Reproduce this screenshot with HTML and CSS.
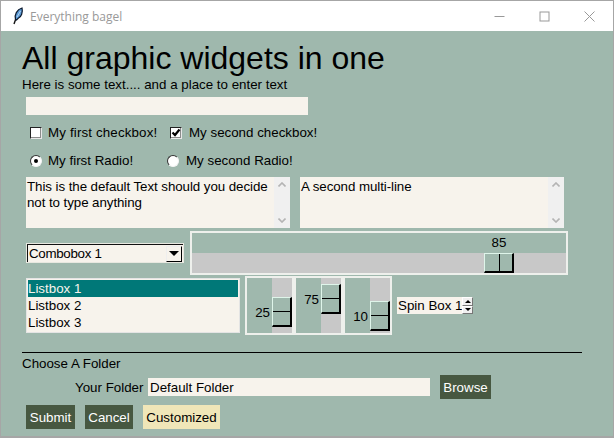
FILE: index.html
```html
<!DOCTYPE html>
<html lang="en">
<head>
    <meta charset="UTF-8">
    <title>Everything bagel</title>
    <link rel="stylesheet" href="styles.css">
</head>
<body>
    <div class="window">
        <div class="titlebar">
            <svg class="feather" width="12" height="18" viewBox="0 0 12 18">
                <path d="M2 17 L4.5 10" fill="none" stroke="#111" stroke-width="1.4"/>
                <path d="M3.5 12.5 C2 8 5 2.5 10 1 C11 5 9.5 10 6 11.5 L4.5 13 Z" fill="#5a9ad6" stroke="#0d1a2e" stroke-width="1.2"/>
                <path d="M5 10 L8.5 4" fill="none" stroke="#cfe3f7" stroke-width="0.8"/>
            </svg>
            <span class="title-text">Everything bagel</span>
            <div class="win-controls">
                <svg width="11" height="11" viewBox="0 0 11 11"><path d="M0.5 5.5 H10.5" stroke="#999" fill="none"/></svg>
                <svg width="11" height="11" viewBox="0 0 11 11"><rect x="1" y="1" width="9" height="9" stroke="#999" fill="none"/></svg>
                <svg width="11" height="11" viewBox="0 0 11 11"><path d="M0.5 0.5 L10.5 10.5 M10.5 0.5 L0.5 10.5" stroke="#999" fill="none"/></svg>
            </div>
        </div>

        <div class="content">
            <h1>All graphic widgets in one</h1>
            <div class="intro">Here is some text.... and a place to enter text</div>
            <input class="field field-main" type="text">

            <div class="check-row">
                <label class="opt opt-check1"><span class="box"></span>My first checkbox!</label>
                <label class="opt"><span class="box checked"><svg width="10" height="10" viewBox="0 0 10 10"><path d="M1.5 4.5 L4 7 L8.5 1.5" fill="none" stroke="#000" stroke-width="2.2"/></svg></span>My second checkbox!</label>
            </div>
            <div class="radio-row">
                <label class="opt opt-radio1"><span class="radio on"></span>My first Radio!</label>
                <label class="opt"><span class="radio"></span>My second Radio!</label>
            </div>

            <div class="text-row">
                <div class="multi">
                    <div class="multi-text">This is the default Text should you decide not to type anything</div>
                    <div class="scrollbar">
                        <svg width="8" height="5" viewBox="0 0 8 5"><path d="M0.5 4.5 L4 1 L7.5 4.5" fill="none" stroke="#b4b4b4" stroke-width="1.6"/></svg>
                        <svg width="8" height="5" viewBox="0 0 8 5"><path d="M0.5 0.5 L4 4 L7.5 0.5" fill="none" stroke="#b4b4b4" stroke-width="1.6"/></svg>
                    </div>
                </div>
                <div class="multi">
                    <div class="multi-text">A second multi-line</div>
                    <div class="scrollbar">
                        <svg width="8" height="5" viewBox="0 0 8 5"><path d="M0.5 4.5 L4 1 L7.5 4.5" fill="none" stroke="#b4b4b4" stroke-width="1.6"/></svg>
                        <svg width="8" height="5" viewBox="0 0 8 5"><path d="M0.5 0.5 L4 4 L7.5 0.5" fill="none" stroke="#b4b4b4" stroke-width="1.6"/></svg>
                    </div>
                </div>
            </div>

            <div class="combo-row">
                <div class="combo">
                    <div class="combo-text">Combobox 1</div>
                    <div class="combo-btn"><span class="arrow-down"></span></div>
                </div>
                <div class="hslider">
                    <div class="hslider-value" style="margin-left: 292px">85</div>
                    <div class="hslider-trough">
                        <div class="thumb-h" style="margin-left: 292px"></div>
                    </div>
                </div>
            </div>

            <div class="list-row">
                <div class="listbox">
                    <div class="list-item selected">Listbox 1</div>
                    <div class="list-item">Listbox 2</div>
                    <div class="list-item">Listbox 3</div>
                </div>
                <div class="vsliders">
                    <div class="vslider">
                        <div class="vslider-value" style="margin-top: 27px">25</div>
                        <div class="vslider-trough"><div class="thumb-v" style="margin-top: 19px"></div></div>
                    </div>
                    <div class="vslider">
                        <div class="vslider-value" style="margin-top: 14px">75</div>
                        <div class="vslider-trough"><div class="thumb-v" style="margin-top: 6px"></div></div>
                    </div>
                    <div class="vslider">
                        <div class="vslider-value" style="margin-top: 31px">10</div>
                        <div class="vslider-trough"><div class="thumb-v" style="margin-top: 23px"></div></div>
                    </div>
                </div>
                <div class="spin">
                    <div class="spin-text">Spin Box 1</div>
                    <div class="spin-btns">
                        <div class="spin-btn"><span class="arrow-up"></span></div>
                        <div class="spin-btn"><span class="arrow-down small"></span></div>
                    </div>
                </div>
            </div>

            <div class="divider"></div>
            <div class="folder-title">Choose A Folder</div>
            <div class="folder-row">
                <span class="folder-label">Your Folder</span>
                <input class="field field-folder" type="text" value="Default Folder">
                <button class="btn btn-browse">Browse</button>
            </div>
            <div class="button-row">
                <button class="btn btn-submit">Submit</button>
                <button class="btn btn-cancel">Cancel</button>
                <button class="btn btn-custom">Customized</button>
            </div>
        </div>
    </div>
</body>
</html>
```

FILE: styles.css
```css
* {
    box-sizing: border-box;
}
body {
    margin: 0;
    font-family: "Liberation Sans", Arial, sans-serif;
    font-size: 13.33px;
    color: #000;
}
.window {
    width: 614px;
    height: 438px;
    border: 1px solid #a6a6a6;
    border-bottom-width: 2px;
    background-color: #9FB8AD;
    overflow: hidden;
}
.titlebar {
    height: 30px;
    background-color: #fff;
    display: flex;
    align-items: center;
    padding-left: 11px;
}
.title-text {
    font-family: "Open Sans", sans-serif;
    font-size: 12px;
    color: #999;
    margin-left: 6px;
}
.win-controls {
    margin-left: auto;
    display: flex;
    gap: 34px;
    padding-right: 18px;
}
.content {
    padding: 0 0 0 21px;
}
h1 {
    margin: 9px 0 0;
    font-size: 32px;
    font-weight: normal;
    line-height: 37px;
}
.intro {
    line-height: 16px;
    height: 16px;
}
.field {
    display: block;
    height: 18px;
    border: none;
    background-color: #F7F3EC;
    font-family: inherit;
    font-size: 13.33px;
    padding: 0 2px;
    margin: 0;
    outline: none;
    color: #000;
}
.field-main {
    width: 282px;
    margin: 4px 0 0 4px;
}
.opt {
    display: flex;
    align-items: center;
    line-height: 16px;
}
.check-row {
    display: flex;
    margin: 10px 0 0 8px;
    height: 16px;
}
.opt-check1 {
    width: 140px;
    letter-spacing: 0.15px;
}
.radio-row {
    display: flex;
    margin: 12px 0 0 8px;
    height: 16px;
}
.opt-radio1 {
    width: 137px;
}
.box {
    width: 12px;
    height: 12px;
    border: 1px solid #222;
    border-right-color: #e8e8e8;
    border-bottom-color: #e8e8e8;
    box-shadow: inset -1px -1px 0 #8c8c8c;
    background-color: #fff;
    margin-right: 6px;
    display: flex;
    align-items: center;
    justify-content: center;
}
.opt .checked {
    margin-right: 7px;
}
.radio {
    width: 12px;
    height: 12px;
    border-radius: 50%;
    border: 1px solid #333;
    border-right-color: #f4f4f4;
    border-bottom-color: #f4f4f4;
    background-color: #fff;
    margin-right: 6px;
    display: flex;
    align-items: center;
    justify-content: center;
}
.radio.on::after {
    content: "";
    width: 4px;
    height: 4px;
    border-radius: 50%;
    background-color: #000;
}
.opt-radio1 + .opt .radio {
    margin-right: 7px;
}
.text-row {
    display: flex;
    gap: 10px;
    margin: 8px 0 0 4px;
}
.multi {
    width: 264px;
    height: 51px;
    background-color: #F7F3EC;
    display: flex;
}
.multi-text {
    flex: 1;
    padding: 2px 1px;
    line-height: 16px;
    letter-spacing: -0.07px;
}
.scrollbar {
    width: 16px;
    background-color: #f0f0f0;
    display: flex;
    flex-direction: column;
    align-items: center;
    justify-content: space-between;
    padding: 5px 0;
}
.combo-row {
    display: flex;
    margin: 3px 0 0 4px;
}
.combo {
    width: 158px;
    height: 20px;
    margin: 12px 6px 0 0;
    background-color: #F7F3EC;
    border: 1px solid #e8e8e0;
    box-shadow: inset 1px 1px 0 #111;
    display: flex;
    align-items: center;
    justify-content: space-between;
}
.combo-text {
    padding-left: 2px;
    letter-spacing: -0.3px;
}
.combo-btn {
    width: 16px;
    height: 16px;
    margin: 1px 1px 0 0;
    border: 1px solid #000;
    border-top-color: #eee;
    border-left-color: #eee;
    display: flex;
    align-items: center;
    justify-content: center;
}
.arrow-down {
    width: 0;
    height: 0;
    border-left: 5px solid transparent;
    border-right: 5px solid transparent;
    border-top: 5px solid #000;
}
.arrow-down.small {
    border-left-width: 3px;
    border-right-width: 3px;
    border-top-width: 3px;
}
.arrow-up {
    width: 0;
    height: 0;
    border-left: 3px solid transparent;
    border-right: 3px solid transparent;
    border-bottom: 3px solid #000;
}
.hslider {
    width: 378px;
    height: 44px;
    border: 2px solid #eef0ec;
}
.hslider-value {
    height: 20px;
    line-height: 20px;
    width: 30px;
    text-align: center;
}
.hslider-trough {
    height: 20px;
    background-color: #c8c8c8;
}
.thumb-h {
    width: 30px;
    height: 20px;
    background-color: #9FB8AD;
    border: 1px solid #000;
    border-top-color: #dff5ea;
    border-left-color: #dff5ea;
    border-right-width: 2px;
    border-bottom-width: 2px;
}
.thumb-h::after {
    content: "";
    display: block;
    width: 1px;
    height: 100%;
    margin-left: 14px;
    background-color: #000;
}
.list-row {
    display: flex;
    margin: 3px 0 0 4px;
}
.listbox {
    width: 214px;
    height: 55px;
    background-color: #F7F3EC;
    border: 1px solid #e4e4e4;
    padding: 1px;
}
.list-item {
    height: 17px;
    line-height: 17px;
}
.selected {
    background-color: #007878;
    color: #f7f3ec;
}
.vsliders {
    display: flex;
    margin: -2px 0 0 5px;
    height: 59px;
}
.vslider {
    width: 49px;
    height: 59px;
    display: flex;
    justify-content: flex-end;
    border: 2px solid #eef0ec;
}
.vslider-value {
    line-height: 16px;
    height: 16px;
    margin-right: 2px;
}
.vslider-trough {
    width: 20px;
    height: 55px;
    background-color: #c8c8c8;
}
.thumb-v {
    width: 20px;
    height: 30px;
    background-color: #9FB8AD;
    border: 1px solid #000;
    border-top-color: #dff5ea;
    border-left-color: #dff5ea;
    border-right-width: 2px;
    border-bottom-width: 2px;
    display: flex;
    align-items: center;
}
.thumb-v::after {
    content: "";
    width: 100%;
    height: 1px;
    background-color: #000;
}
.spin {
    width: 76px;
    height: 17px;
    margin: 19px 0 0 5px;
    background-color: #F7F3EC;
    display: flex;
    justify-content: space-between;
}
.spin-text {
    line-height: 17px;
    padding-left: 1px;
    white-space: nowrap;
}
.spin-btns {
    width: 11px;
    display: flex;
    flex-direction: column;
}
.spin-btn {
    flex: 1;
    background-color: #f0f0f0;
    border: 1px solid #777;
    border-top-color: #fff;
    border-left-color: #fff;
    display: flex;
    align-items: center;
    justify-content: center;
}
.divider {
    width: 560px;
    height: 1px;
    background-color: #000;
    margin-top: 17px;
}
.folder-title {
    line-height: 16px;
    margin-top: 3px;
}
.folder-row {
    display: flex;
    align-items: center;
    margin: 3px 0 0 53px;
}
.folder-label {
    width: 73px;
}
.field-folder {
    width: 282px;
    margin-right: 10px;
}
.btn {
    height: 24px;
    border: none;
    padding: 0;
    background-color: #475841;
    color: #fff;
    font-family: inherit;
    font-size: 13.33px;
}
.btn-browse {
    width: 51px;
}
.btn-submit {
    width: 49px;
}
.btn-cancel {
    width: 48px;
}
.button-row {
    display: flex;
    gap: 10px;
    margin: 6px 0 0 4px;
}
.btn-custom {
    width: 77px;
    background-color: #F0E6B8;
    color: #000;
}
```
